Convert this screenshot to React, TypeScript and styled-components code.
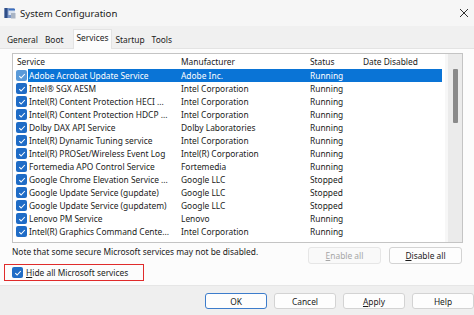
import React from 'react';
import styled, { createGlobalStyle } from 'styled-components';

interface Service {
    name: string;
    maker: string;
    status: string;
    selected?: boolean;
}

const services: Service[] = [
    { name: 'Adobe Acrobat Update Service', maker: 'Adobe Inc.', status: 'Running', selected: true },
    { name: 'Intel® SGX AESM', maker: 'Intel Corporation', status: 'Running' },
    { name: 'Intel(R) Content Protection HECI ...', maker: 'Intel Corporation', status: 'Running' },
    { name: 'Intel(R) Content Protection HDCP ...', maker: 'Intel Corporation', status: 'Running' },
    { name: 'Dolby DAX API Service', maker: 'Dolby Laboratories', status: 'Running' },
    { name: 'Intel(R) Dynamic Tuning service', maker: 'Intel Corporation', status: 'Running' },
    { name: 'Intel(R) PROSet/Wireless Event Log', maker: 'Intel(R) Corporation', status: 'Running' },
    { name: 'Fortemedia APO Control Service', maker: 'Fortemedia', status: 'Running' },
    { name: 'Google Chrome Elevation Service ...', maker: 'Google LLC', status: 'Stopped' },
    { name: 'Google Update Service (gupdate)', maker: 'Google LLC', status: 'Stopped' },
    { name: 'Google Update Service (gupdatem)', maker: 'Google LLC', status: 'Stopped' },
    { name: 'Lenovo PM Service', maker: 'Lenovo', status: 'Running' },
    { name: 'Intel(R) Graphics Command Cente...', maker: 'Intel Corporation', status: 'Running' },
];

const tabs = ['General', 'Boot', 'Services', 'Startup', 'Tools'];

const GlobalStyle = createGlobalStyle`
    html, body {
        margin: 0;
        padding: 0;
        background: #f3f3f3;
    }
    body {
        font-family: "Noto Sans", "Open Sans", sans-serif;
        color: #1b1b1b;
    }
`;

const Window = styled.div`
    width: 474px;
    height: 315px;
    overflow: hidden;
    display: flex;
    flex-direction: column;
    background: #f3f3f3;
`;

const TitleBar = styled.div`
    height: 26px;
    flex-shrink: 0;
    display: flex;
    align-items: center;
    gap: 4px;
    padding: 0 5px 0 4px;
    background: #f6f6f6;
`;

const Title = styled.span`
    flex: 1;
    font-size: 9.6px;
    color: #1a1a1a;
`;

const TabStrip = styled.div`
    height: 22px;
    flex-shrink: 0;
    display: flex;
    align-items: flex-end;
    padding-left: 3.5px;
    background: #f0f0f0;
`;

const Tab = styled.div<{ $active?: boolean }>`
    height: ${(p) => (p.$active ? '19px' : '17px')};
    line-height: ${(p) => (p.$active ? '15px' : '17px')};
    padding: 0 ${(p) => (p.$active ? '2.5px' : '3.5px')};
    margin-left: ${(p) => (p.$active ? '6px' : '0')};
    margin-bottom: ${(p) => (p.$active ? '-1px' : '0')};
    font-size: 8.4px;
    background: ${(p) => (p.$active ? '#fcfcfc' : 'transparent')};
    border: ${(p) => (p.$active ? '1px solid #e3e3e3' : 'none')};
    border-bottom: none;
    position: relative;
    z-index: 1;
`;

const Panel = styled.div`
    height: 237px;
    flex-shrink: 0;
    box-sizing: border-box;
    padding: 4px 0;
    background: #fcfcfc;
    border-top: 1px solid #e3e3e3;
    display: flex;
    flex-direction: column;
`;

const ListBox = styled.div`
    margin-left: 12px;
    width: 451px;
    height: 190px;
    flex-shrink: 0;
    box-sizing: border-box;
    border: 1px solid #c4c4c4;
    display: flex;
    overflow: hidden;
    background: #ffffff;
`;

const ListMain = styled.div`
    flex: 1;
    display: flex;
    flex-direction: column;
    min-width: 0;
    overflow: hidden;
`;

const HeaderRow = styled.div`
    height: 15px;
    flex-shrink: 0;
    display: grid;
    grid-template-columns: 164px 129px 53px 1fr;
    align-items: center;
    font-size: 8.4px;
`;

const HeaderCell = styled.div`
    padding-left: 4px;
    white-space: nowrap;
    overflow: hidden;
`;

const ListBody = styled.div`
    flex: 1;
    min-height: 0;
    overflow: hidden;
`;

const Row = styled.div`
    height: 13px;
    margin-right: 3px;
    display: grid;
    grid-template-columns: 15px 149px 129px 53px 1fr;
    align-items: stretch;
    font-size: 8.4px;
`;

const CheckCell = styled.div`
    display: flex;
    align-items: center;
    padding-left: 3px;
`;

const Cell = styled.div<{ $selected?: boolean }>`
    padding-left: 4px;
    line-height: 13px;
    white-space: nowrap;
    overflow: hidden;
    background: ${(p) => (p.$selected ? '#0a74d6' : 'transparent')};
    color: ${(p) => (p.$selected ? '#ffffff' : '#1b1b1b')};

    &:nth-child(2) {
        padding-left: 1px;
    }
`;

const Box = styled.span<{ $light?: boolean }>`
    width: 11px;
    height: 11px;
    flex-shrink: 0;
    box-sizing: border-box;
    border-radius: 2px;
    background: ${(p) => (p.$light ? '#5a9ad9' : '#1f6cc6')};
    display: flex;
    align-items: center;
    justify-content: center;
`;

const ScrollTrack = styled.div`
    width: 14px;
    flex-shrink: 0;
    background: #ebebeb;
    border-left: 3px solid #f7f7f7;
    display: flex;
    justify-content: center;
    padding-top: 15px;
`;

const ScrollThumb = styled.div`
    width: 5px;
    height: 54px;
    border-radius: 1px;
    background: #8a8a8a;
`;

const NoteRow = styled.div`
    margin-top: 4px;
    margin-left: 12px;
    width: 450px;
    height: 17px;
    flex-shrink: 0;
    display: flex;
    align-items: flex-start;
    gap: 8px;
`;

const Note = styled.span`
    flex: 1;
    font-size: 8.4px;
    line-height: 10px;
`;

const Button = styled.button<{ $default?: boolean }>`
    width: ${(p) => (p.$default ? '62px' : '73px')};
    height: 17px;
    padding: 0;
    box-sizing: border-box;
    font-family: inherit;
    font-size: 8.4px;
    color: #1b1b1b;
    background: #fdfdfd;
    border: 1px solid ${(p) => (p.$default ? '#3c7ccb' : '#d3d3d3')};
    border-radius: 3px;

    &:disabled {
        color: #a6a6a6;
        border-color: #e6e6e6;
        background: #f9f9f9;
    }
`;

const FooterButton = styled(Button)`
    width: 62px;
    height: 16px;
`;

const Key = styled.span`
    text-decoration: underline;
`;

const HideRow = styled.label`
    margin-left: 4px;
    width: 140px;
    height: 17px;
    flex-shrink: 0;
    box-sizing: border-box;
    border: 1.5px solid #e02b2b;
    display: flex;
    align-items: center;
    gap: 3px;
    padding-left: 7px;
    font-size: 8.4px;
`;

const Footer = styled.div`
    flex: 1;
    display: flex;
    justify-content: flex-end;
    align-items: flex-start;
    gap: 7px;
    padding-top: 7px;
    background: #efefef;
    border-top: 1px solid #e6e6e6;
`;

const Check: React.FC = () => (
    <svg width="8" height="8" viewBox="0 0 8 8">
        <polyline points="1.3,4.2 3.1,6 6.8,2" fill="none" stroke="#ffffff" strokeWidth="1.1" />
    </svg>
);

const AppIcon: React.FC = () => (
    <svg width="12" height="12" viewBox="0 0 12 12">
        <rect x="0.5" y="1" width="10" height="10" fill="#7c98c8" />
        <rect x="0.5" y="1" width="3" height="10" fill="#2f4e88" />
        <rect x="4.5" y="2" width="6.5" height="6" fill="#d9e2ef" />
        <rect x="4.5" y="2" width="6.5" height="1.5" fill="#3b6fc0" />
        <rect x="7" y="6" width="4.5" height="5.5" fill="#a9b4c4" />
    </svg>
);

const CloseIcon: React.FC = () => (
    <svg width="10" height="10" viewBox="0 0 10 10">
        <path d="M1 1 L9 9 M9 1 L1 9" stroke="#1b1b1b" strokeWidth="0.9" />
    </svg>
);

const App: React.FC = () => {
    return (
        <>
            <GlobalStyle />
            <Window>
                <TitleBar>
                    <AppIcon />
                    <Title>System Configuration</Title>
                    <CloseIcon />
                </TitleBar>
                <TabStrip>
                    {tabs.map((t) => (
                        <Tab key={t} $active={t === 'Services'}>{t}</Tab>
                    ))}
                </TabStrip>
                <Panel>
                    <ListBox>
                        <ListMain>
                            <HeaderRow>
                                <HeaderCell>Service</HeaderCell>
                                <HeaderCell>Manufacturer</HeaderCell>
                                <HeaderCell>Status</HeaderCell>
                                <HeaderCell>Date Disabled</HeaderCell>
                            </HeaderRow>
                            <ListBody>
                                {services.map((s) => (
                                    <Row key={s.name}>
                                        <CheckCell>
                                            <Box $light={s.selected}><Check /></Box>
                                        </CheckCell>
                                        <Cell $selected={s.selected}>{s.name}</Cell>
                                        <Cell $selected={s.selected}>{s.maker}</Cell>
                                        <Cell $selected={s.selected}>{s.status}</Cell>
                                        <Cell $selected={s.selected} />
                                    </Row>
                                ))}
                            </ListBody>
                        </ListMain>
                        <ScrollTrack>
                            <ScrollThumb />
                        </ScrollTrack>
                    </ListBox>
                    <NoteRow>
                        <Note>Note that some secure Microsoft services may not be disabled.</Note>
                        <Button disabled><Key>E</Key>nable all</Button>
                        <Button><Key>D</Key>isable all</Button>
                    </NoteRow>
                    <HideRow>
                        <Box><Check /></Box>
                        <span><Key>H</Key>ide all Microsoft services</span>
                    </HideRow>
                </Panel>
                <Footer>
                    <FooterButton $default>OK</FooterButton>
                    <FooterButton>Cancel</FooterButton>
                    <FooterButton><Key>A</Key>pply</FooterButton>
                    <FooterButton>Help</FooterButton>
                </Footer>
            </Window>
        </>
    );
};

export default App;
